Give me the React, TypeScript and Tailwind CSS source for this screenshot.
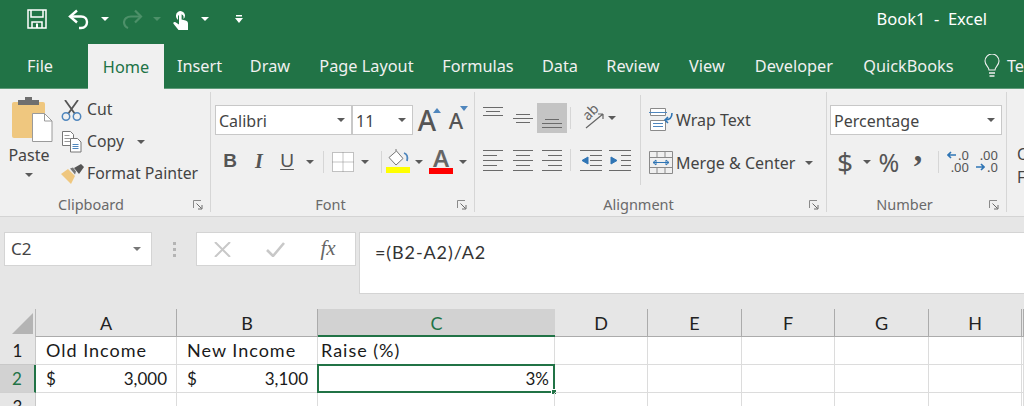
import type { ReactNode } from 'react';

const uiFont = 'font-["Noto_Sans",sans-serif]';
const cellFont = 'font-["Lato",sans-serif]';

function Caret({ className = 'fill-[#5a5a5a]' }: { className?: string }) {
  return (
    <svg width="8" height="4" viewBox="0 0 8 4" className={className}>
      <path d="M0 0h8L4 4z" />
    </svg>
  );
}

function Slot({ className, children }: { className: string; children?: ReactNode }) {
  return <div className={`flex shrink-0 items-center justify-center ${className}`}>{children}</div>;
}

function Launcher() {
  return (
    <svg width="10" height="10" viewBox="0 0 10 10" fill="none" stroke="#8a8a8a">
      <path d="M.5 8V.5H8" />
      <path d="M3.5 3.5l5 5M9 5v4H5" stroke="#6a6a6a" />
    </svg>
  );
}

function Group({ className, label, labelClass = '', children }: { className: string; label: string; labelClass?: string; children: ReactNode }) {
  return (
    <div className={`flex h-[120px] shrink-0 flex-col border-r border-[#d6d6d6] ${className}`}>
      <div className="min-h-0 flex-1">{children}</div>
      <div className="flex h-[17px] items-center pt-[2px]">
        <div className={`flex-1 text-center text-[14.5px] leading-none text-[#6a6a6a] ${labelClass}`}>{label}</div>
        <Slot className="w-[24px]">
          <Launcher />
        </Slot>
      </div>
    </div>
  );
}

function Combo({ className, text }: { className: string; text: string }) {
  return (
    <div className={`flex h-[30px] shrink-0 items-center border border-[#c8c8c8] bg-white pl-[3px] ${className}`}>
      <span className="flex-1 pt-[2px] text-[16px] text-[#444]">{text}</span>
      <Slot className="w-[20px]">
        <Caret />
      </Slot>
    </div>
  );
}

function Lines({ rows, w = 20, h = 20 }: { rows: [number, number, number][]; w?: number; h?: number }) {
  return (
    <svg width={w} height={h} viewBox={`0 0 ${w} ${h}`} stroke="#6a6a6a">
      {rows.map(([y, a, b], i) => (
        <path key={i} d={`M${a} ${y + 0.5}H${b}`} />
      ))}
    </svg>
  );
}

function Sep({ className = 'h-[22px]' }: { className?: string }) {
  return <div className={`w-px shrink-0 bg-[#d6d6d6] ${className}`} />;
}

function TitleBar() {
  return (
    <div className="flex h-[44px] items-center pb-[6px] text-white">
      <Slot className="ml-[27px] w-[20px]">
        <svg width="20" height="20" viewBox="0 0 20 20" fill="none" stroke="#fff" strokeWidth="1.5">
          <path d="M1 1h18v18H1z" />
          <path d="M4 1v7h12V1M5 19v-6h10v6" />
          <path d="M9 14.5h2V19H9z" fill="#fff" stroke="none" />
        </svg>
      </Slot>
      <Slot className="ml-[21px] w-[22px]">
        <svg width="22" height="21" viewBox="0 0 22 21" fill="none" stroke="#fff" strokeWidth="2.4">
          <path d="M9 1.5L2 7.5l7 6" />
          <path d="M3 7.5h10c4 0 6 2.6 6 5.5s-2 6-6 6h-2" />
        </svg>
      </Slot>
      <Slot className="ml-[11px] w-[8px]">
        <Caret className="fill-white" />
      </Slot>
      <Slot className="ml-[13px] w-[21px]">
        <svg width="21" height="20" viewBox="0 0 21 20" fill="none" stroke="#4d9069" strokeWidth="2.2">
          <path d="M13 1.5l6 6-6 6" />
          <path d="M18 7.5H9c-4 0-7 2.5-7 5.5s1.5 5 4 6" />
        </svg>
      </Slot>
      <Slot className="ml-[10px] w-[8px]">
        <Caret className="fill-[#4d9069]" />
      </Slot>
      <Slot className="ml-[11px] w-[17px]">
        <svg width="17" height="21" viewBox="0 0 17 21" fill="#fff">
          <path d="M4 7a4.5 4.5 0 1 1 7.500 3V8.500A2.800 2.800 0 1 0 6 8.500V11A4.500 4.500 0 0 1 4 7z" />
          <path d="M7 5.500a1.300 1.300 0 0 1 2.600 0v5l4 1c1.500.4 2.400 1.500 2.400 3V21H6.500L1.500 14.800c-.8-1.200.8-2.500 2-1.500L7 15.500z" />
        </svg>
      </Slot>
      <Slot className="ml-[12px] w-[8px]">
        <Caret className="fill-white" />
      </Slot>
      <Slot className="ml-[26px] w-[8px]">
        <svg width="8" height="8" viewBox="0 0 8 8" fill="#fff">
          <path d="M1 0h6v1.500H1zM0 3h8L4 8z" />
        </svg>
      </Slot>
      <div className="ml-auto mr-[37px] whitespace-pre pt-px text-[16.5px]">Book1  -  Excel</div>
    </div>
  );
}

const tabs: [string, string][] = [
  ['Insert', 'w-[71px]'],
  ['Draw', 'w-[70px]'],
  ['Page Layout', 'w-[123px]'],
  ['Formulas', 'w-[100px]'],
  ['Data', 'w-[64px]'],
  ['Review', 'w-[82px]'],
  ['View', 'w-[66px]'],
  ['Developer', 'w-[108px]'],
  ['QuickBooks', 'w-[121px]'],
];

function Tabs() {
  return (
    <div className="flex h-[45px] items-stretch border-b border-[#5f9a79] text-[16.3px] text-[#f0f0f0]">
      <div className="flex w-[88px] items-center pl-[27px] pt-px">File</div>
      <div className="-mb-px flex w-[76px] items-center justify-center bg-[#f0f0f0] pt-px text-[#217346]">Home</div>
      {tabs.map(([name, w]) => (
        <div key={name} className={`flex items-center justify-center whitespace-nowrap pt-px ${w}`}>
          {name}
        </div>
      ))}
      <Slot className="ml-[15px] w-[16px] pb-[2px]">
        <svg width="16" height="23" viewBox="0 0 16 23" fill="none" stroke="#f0f0f0" strokeWidth="1.100">
          <path d="M5 16c0-3-4-4.500-4-9a7 7 0 0 1 14 0c0 4.500-4 6-4 9z" />
          <path d="M5 19h6M5.500 22h5" strokeWidth="1.600" />
        </svg>
      </Slot>
      <div className="ml-[7px] flex items-center pt-px">Te</div>
    </div>
  );
}

function Clipboard() {
  return (
    <Group className="w-[211px]" label="Clipboard" labelClass="pr-[4px]">
      <div className="flex">
        <div className="flex w-[61px] shrink-0 flex-col">
          <svg width="41" height="45" viewBox="0 0 41 45" className="ml-[12px] mt-[5px]">
            <rect x="0" y="5" width="33" height="36" rx="2" fill="#efc77f" />
            <path d="M6 8V3h7V0h7v3h7v5z" fill="#6f6f6f" />
            <path d="M20.500 16.500h12l7.500 7.500v20.500H20.500z" fill="#fff" stroke="#9a9a9a" />
            <path d="M32.500 16.500V24H40" fill="none" stroke="#9a9a9a" />
          </svg>
          <div className="mt-[3px] pr-[3px] text-center text-[16px] leading-[20px] text-[#444]">Paste</div>
          <Slot className="mt-[8px] w-[61px] pr-[3px]">
            <Caret />
          </Slot>
        </div>
        <div className="mt-[2px] flex flex-col text-[15.8px] text-[#444]">
          <div className="flex h-[32px] items-center">
            <Slot className="w-[26px] justify-start">
              <svg width="21" height="21" viewBox="0 0 21 21" fill="none">
                <path d="M4 0l10 14M17 0L7 14" stroke="#555" strokeWidth="1.800" />
                <circle cx="5" cy="16.500" r="3.700" stroke="#4f86bd" strokeWidth="1.500" />
                <circle cx="16" cy="16.500" r="3.700" stroke="#4f86bd" strokeWidth="1.500" />
              </svg>
            </Slot>
            <span>Cut</span>
          </div>
          <div className="flex h-[32px] items-center">
            <Slot className="w-[26px] justify-start">
              <svg width="21" height="22" viewBox="0 0 21 22" fill="#fff" stroke="#777">
                <path d="M1.500 .5h8l3 3v11h-11z" />
                <path d="M3.500 4.500h5M3.500 7.500h6M3.500 10.500h6" stroke="#999" />
                <path d="M9.500 7.500h7l3.500 3.500v10H9.500z" />
                <path d="M11.500 13.500h6M11.500 15.500h6M11.500 17.500h6" stroke="#4f86bd" />
              </svg>
            </Slot>
            <span>Copy</span>
            <Slot className="ml-[13px] w-[8px]">
              <Caret />
            </Slot>
          </div>
          <div className="flex h-[32px] items-center">
            <Slot className="w-[26px] justify-start">
              <svg width="23" height="20" viewBox="0 0 23 20">
                <path d="M0 10l7-5 7 7-4 8z" fill="#efc77f" />
                <path d="M9 4.500l3-1 3 4-1 3z" fill="#777" />
                <path d="M13 4l7-4 3 3-5 7z" fill="#555" />
              </svg>
            </Slot>
            <span className="whitespace-nowrap">Format Painter</span>
          </div>
        </div>
      </div>
    </Group>
  );
}

function Font() {
  return (
    <Group className="w-[264px]" label="Font">
      <div className="flex items-center pl-[4px] pt-[13px]">
        <Combo className="w-[137px]" text="Calibri" />
        <Combo className="w-[61px]" text="11" />
        <Slot className="ml-[2px] w-[24px] items-start">
          <span className="relative text-[28px] font-medium leading-[30px] text-[#555]">
            A
            <svg width="8" height="5" viewBox="0 0 8 5" className="absolute right-[-5px] top-[3px] fill-[#4f86bd]">
              <path d="M4 0l4 5H0z" />
            </svg>
          </span>
        </Slot>
        <Slot className="ml-[7px] w-[20px]">
          <span className="relative text-[22px] font-medium leading-[30px] text-[#555]">
            A
            <svg width="8" height="5" viewBox="0 0 8 5" className="absolute right-[-5px] top-[1px] fill-[#4f86bd]">
              <path d="M0 0h8L4 5z" />
            </svg>
          </span>
        </Slot>
      </div>
      <div className="mt-[13px] flex h-[28px] items-center pl-[5px] text-[#555]">
        <Slot className="w-[28px] pb-[2px] font-['Liberation_Sans',sans-serif] text-[19px] font-bold">B</Slot>
        <Slot className="ml-px w-[28px] pb-[2px] font-['Liberation_Serif',serif] text-[20px] font-bold italic">I</Slot>
        <Slot className="w-[28px] pb-[2px] font-['Liberation_Sans',sans-serif] text-[19px] underline underline-offset-2">U</Slot>
        <Slot className="w-[18px]">
          <Caret />
        </Slot>
        <Slot className="w-[8px]">
          <Sep />
        </Slot>
        <Slot className="ml-[3px] w-[26px]">
          <svg width="22" height="20" viewBox="0 0 22 20" fill="#fff" stroke="#8a8a8a">
            <path d="M.5.5h21v19H.5z" strokeDasharray="1 1" />
            <path d="M11 .5v19M.5 10h21" strokeDasharray="1 1" />
          </svg>
        </Slot>
        <Slot className="ml-[3px] w-[12px]">
          <Caret />
        </Slot>
        <Slot className="ml-[6px] w-[8px]">
          <Sep />
        </Slot>
        <Slot className="w-[25px] pb-[3px]">
          <svg width="24" height="24" viewBox="0 0 24 24" fill="none">
            <path d="M3 8.500L10.500 2 17 9.500 10 16z" fill="#fff" stroke="#777" />
            <path d="M10 2V0" stroke="#777" />
            <path d="M18 4c3 1 4 4 3 8" stroke="#4f86bd" strokeWidth="1.800" />
            <path d="M0 18h24v6H0z" fill="#ffff00" />
          </svg>
        </Slot>
        <Slot className="ml-[5px] w-[8px]">
          <Caret />
        </Slot>
        <Slot className="ml-[5px] w-[26px] pb-[3px]">
          <div className="flex flex-col items-center">
            <span className="h-[20px] text-[24px] font-semibold leading-[20px] text-[#666]">A</span>
            <div className="h-[6px] w-[24px] bg-[#ff0000]" />
          </div>
        </Slot>
        <Slot className="ml-[5px] w-[8px]">
          <Caret />
        </Slot>
      </div>
    </Group>
  );
}

function Alignment() {
  return (
    <Group className="w-[352px]" label="Alignment">
      <div className="flex">
        <div className="flex w-[165px] shrink-0 flex-col pl-[3px] pt-[11px]">
          <div className="flex h-[30px] items-center">
            <Slot className="w-[30px] self-start pt-[4px]">
              <Lines rows={[[0, 0, 20], [4, 3, 17], [8, 0, 20]]} h={9} />
            </Slot>
            <Slot className="w-[29px]">
              <Lines rows={[[0, 3, 17], [4, 0, 20], [8, 3, 17]]} h={9} />
            </Slot>
            <Slot className="h-[30px] w-[30px] items-end bg-[#c4c4c4] pb-[5px]">
              <Lines rows={[[0, 3, 17], [4, 0, 20], [8, 0, 20]]} h={9} />
            </Slot>
            <Slot className="ml-[3px] w-px">
              <Sep />
            </Slot>
            <Slot className="ml-[11px] w-[22px]">
              <div className="relative h-[22px] w-[22px]">
                <svg width="22" height="22" viewBox="0 0 22 22" fill="none" stroke="#666">
                  <path d="M4 21L21 7M21 7h-5M21 7v5" strokeWidth="1.200" />
                </svg>
                <span className="absolute left-[0px] top-[-2px] -rotate-45 text-[14px] leading-none text-[#666]">ab</span>
              </div>
            </Slot>
            <Slot className="ml-[4px] w-[8px]">
              <Caret />
            </Slot>
          </div>
          <div className="mt-[12px] flex h-[30px] items-center">
            <Slot className="w-[30px]">
              <Lines rows={[[0, 0, 20], [5, 0, 14], [10, 0, 20], [15, 0, 14], [20, 0, 20]]} h={21} />
            </Slot>
            <Slot className="w-[29px]">
              <Lines rows={[[0, 0, 20], [5, 3, 17], [10, 0, 20], [15, 3, 17], [20, 0, 20]]} h={21} />
            </Slot>
            <Slot className="w-[30px]">
              <Lines rows={[[0, 0, 20], [5, 6, 20], [10, 0, 20], [15, 6, 20], [20, 0, 20]]} h={21} />
            </Slot>
            <Slot className="ml-[3px] w-px">
              <Sep />
            </Slot>
            <Slot className="ml-[9px] w-[22px]">
              <svg width="22" height="21" viewBox="0 0 22 21" stroke="#6a6a6a" fill="none">
                <path d="M0 .5h22M10 5.500h12M10 10.500h12M10 15.500h12M0 20.500h22" />
                <path d="M8 7L2 10.500 8 14z" fill="#2f75b5" stroke="#2f75b5" />
              </svg>
            </Slot>
            <Slot className="ml-[7px] w-[22px]">
              <svg width="22" height="21" viewBox="0 0 22 21" stroke="#6a6a6a" fill="none">
                <path d="M0 .5h22M12 5.500h10M12 10.500h10M12 15.500h10M0 20.500h22" />
                <path d="M2 7l6 3.500L2 14z" fill="#2f75b5" stroke="#2f75b5" />
              </svg>
            </Slot>
          </div>
        </div>
        <div className="mt-[3px] h-[90px] w-px shrink-0 bg-[#d6d6d6]" />
        <div className="flex flex-col pl-[8px] pt-[6px] text-[16px] text-[#444]">
          <div className="flex h-[43px] items-center">
            <Slot className="w-[27px] justify-start">
              <svg width="24" height="23" viewBox="0 0 24 23" fill="none">
                <path d="M1.500 .5h15v7h-15zM1.500 12.500h15v10h-15z" fill="#fff" stroke="#8a8a8a" />
                <path d="M0 4.500h18" stroke="#4f86bd" />
                <path d="M4 15.500h10M4 18.500h10" stroke="#4f86bd" />
                <path d="M23 5c0 5-3 7-7 7M19 9l-3 3 3 3" stroke="#2f75b5" strokeWidth="1.600" />
              </svg>
            </Slot>
            <span>Wrap Text</span>
          </div>
          <div className="flex h-[43px] items-center">
            <Slot className="w-[27px] justify-start">
              <svg width="24" height="23" viewBox="0 0 24 23" fill="none" stroke="#8a8a8a">
                <path d="M.5 .5h23v22H.5zM.5 6.500h23M.5 16.500h23M8 .5v6M16 .5v6M8 16.500v6M16 16.500v6" />
                <path d="M4 11.500h16M4 11.500l3-2.500v5zM20 11.500l-3-2.500v5z" stroke="#2f75b5" />
              </svg>
            </Slot>
            <span className="whitespace-nowrap">Merge &amp; Center</span>
            <Slot className="ml-[10px] w-[8px]">
              <Caret />
            </Slot>
          </div>
        </div>
      </div>
    </Group>
  );
}

function Arrow({ right = false }: { right?: boolean }) {
  return (
    <svg width="9" height="8" viewBox="0 0 9 8" fill="none" stroke="#2f75b5" strokeWidth="1.600">
      <path d={right ? 'M0 4h8M5 1l3 3-3 3' : 'M9 4H1M4 1L1 4l3 3'} />
    </svg>
  );
}

function NumberGroup() {
  return (
    <Group className="w-[180px]" label="Number">
      <div className="pl-[3px] pt-[13px]">
        <Combo className="w-[172px]" text="Percentage" />
      </div>
      <div className="mt-[13px] flex h-[28px] items-center text-[#555]">
        <Slot className="ml-[8px] w-[20px] text-[28px] leading-none">$</Slot>
        <Slot className="ml-[8px] w-[8px]">
          <Caret />
        </Slot>
        <Slot className="ml-[6px] w-[24px] text-[25px] leading-none">%</Slot>
        <Slot className="ml-[5px] h-[24px] w-[24px] items-start font-['Liberation_Serif',serif] text-[34px] font-bold leading-[0px]">,</Slot>
        <Slot className="ml-[8px] w-px">
          <Sep />
        </Slot>
        <div className="mb-[3px] ml-[5px] flex w-[25px] shrink-0 flex-col items-end text-[13px] leading-[12px]">
          <div className="flex items-center gap-[2px]">
            <Arrow />
            <span>.0</span>
          </div>
          <span>.00</span>
        </div>
        <div className="mb-[3px] ml-[4px] flex w-[25px] shrink-0 flex-col items-end text-[13px] leading-[12px]">
          <span>.00</span>
          <div className="flex items-center gap-[2px]">
            <Arrow right />
            <span>.0</span>
          </div>
        </div>
      </div>
    </Group>
  );
}

function Ribbon() {
  return (
    <div className="flex h-[128px] items-start overflow-hidden border-b border-[#d4d4d4] bg-[#f0f0f0] pt-[3px]">
      <Clipboard />
      <Font />
      <Alignment />
      <NumberGroup />
      <div className="flex flex-col pl-[10px] pt-[51px] text-[15.5px] leading-[23px] text-[#444]">
        <span>C</span>
        <span>Fo</span>
      </div>
    </div>
  );
}

function FormulaBar() {
  return (
    <div className="flex h-[92px] items-start bg-[#e6e6e6] pl-[4px] pt-[15px]">
      <div className="flex h-[34px] w-[148px] shrink-0 items-center border border-[#d4d4d4] bg-white pl-[6px] text-[17px] text-[#444]">
        <span className="flex-1">C2</span>
        <Slot className="w-[28px]">
          <Caret className="fill-[#777]" />
        </Slot>
      </div>
      <div className="flex h-[34px] w-[44px] shrink-0 flex-col items-center justify-center gap-[3px]">
        <div className="h-[3px] w-[3px] bg-[#b4b4b4]" />
        <div className="h-[3px] w-[3px] bg-[#b4b4b4]" />
        <div className="h-[3px] w-[3px] bg-[#b4b4b4]" />
      </div>
      <div className="flex h-[34px] w-[160px] shrink-0 items-center border border-[#d4d4d4] bg-white">
        <Slot className="ml-[17px] w-[17px]">
          <svg width="17" height="15" viewBox="0 0 17 15" stroke="#c8c8c8" strokeWidth="2" fill="none">
            <path d="M1 0l15 15M16 0L1 15" />
          </svg>
        </Slot>
        <Slot className="ml-[35px] w-[19px]">
          <svg width="19" height="15" viewBox="0 0 19 15" stroke="#c8c8c8" strokeWidth="2.600" fill="none">
            <path d="M1 8l6 6L18 1" />
          </svg>
        </Slot>
        <Slot className="ml-[33px] w-[20px] font-['Liberation_Serif',serif] text-[21px] italic text-[#666]">fx</Slot>
      </div>
      <div className={`ml-[3px] flex h-[62px] flex-1 border-b border-l border-t border-[#d4d4d4] bg-white pl-[15px] pt-[6px] text-[18px] tracking-[0.9px] text-[#333] ${cellFont}`}>
        =(B2-A2)/A2
      </div>
    </div>
  );
}

const cols: [string, string][] = [
  ['A', 'w-[141px]'],
  ['B', 'w-[141px]'],
  ['C', 'w-[237px]'],
  ['D', 'w-[93px]'],
  ['E', 'w-[94px]'],
  ['F', 'w-[93px]'],
  ['G', 'w-[94px]'],
  ['H', 'w-[93px]'],
  ['', 'flex-1'],
];

function HeaderRow() {
  return (
    <div className="flex h-[28px] bg-[#e6e6e6] text-[18px] text-[#222]">
      <div className="flex w-[36px] shrink-0 items-end border-r border-[#b8b8b8] pb-[3px] pl-[12px]">
        <svg width="21" height="21" viewBox="0 0 21 21" className="fill-[#b4b4b4]">
          <path d="M21 0v21H0z" />
        </svg>
      </div>
      {cols.map(([name, w], i) =>
        name === 'C' ? (
          <div key={i} className={`flex items-center justify-center border-b-2 border-[#217346] bg-[#d2d2d2] pt-[2px] text-[#217346] ${w}`}>
            {name}
          </div>
        ) : (
          <div key={i} className={`flex items-center justify-center border-b border-r border-[#ababab] pt-[2px] ${w}`}>
            {name}
          </div>
        ),
      )}
    </div>
  );
}

function Row({ n, selected = false, children }: { n: string; selected?: boolean; children: ReactNode }) {
  return (
    <div className="flex h-[28px] text-[17px] text-[#1a1a1a]">
      <div
        className={`flex w-[36px] shrink-0 items-center justify-center border-b border-r ${
          selected ? 'border-r-2 border-b-[#d0d0d0] border-r-[#217346] bg-[#d2d2d2] text-[#217346]' : 'border-[#c8c8c8] bg-[#e6e6e6]'
        }`}
      >
        {n}
      </div>
      {children}
    </div>
  );
}

function Cell({ className, children }: { className: string; children?: ReactNode }) {
  return <div className={`relative flex items-center border-b border-r border-[#dcdcdc] ${className}`}>{children}</div>;
}

function Money({ value }: { value: string }) {
  return (
    <div className="flex w-full justify-between pl-[10px] pr-[9px] pt-px">
      <span>$</span>
      <span>{value}</span>
    </div>
  );
}

function EmptyCells() {
  return (
    <>
      <Cell className="w-[93px]" />
      <Cell className="w-[94px]" />
      <Cell className="w-[93px]" />
      <Cell className="w-[94px]" />
      <Cell className="w-[93px]" />
      <Cell className="flex-1" />
    </>
  );
}

function Sheet() {
  return (
    <div className={`bg-white ${cellFont}`}>
      <HeaderRow />
      <Row n="1">
        <Cell className="w-[141px] pl-[10px] text-[18px] tracking-[1px]">Old Income</Cell>
        <Cell className="w-[141px] pl-[10px] text-[18px] tracking-[1px]">New Income</Cell>
        <Cell className="w-[237px] pl-[3px] text-[18px] tracking-[1px]">Raise (%)</Cell>
        <EmptyCells />
      </Row>
      <Row n="2" selected>
        <Cell className="w-[141px]">
          <Money value="3,000" />
        </Cell>
        <Cell className="w-[141px]">
          <Money value="3,100" />
        </Cell>
        <Cell className="w-[237px] justify-end pr-[5px] pt-px">
          3%
          <div className="absolute -left-px -top-px bottom-[-1px] right-[-1px] border-2 border-[#217346]" />
          <div className="absolute bottom-[-3px] right-[-3px] h-[6px] w-[6px] border border-white bg-[#217346]" />
        </Cell>
        <EmptyCells />
      </Row>
      <Row n="3">
        <Cell className="w-[141px]" />
        <Cell className="w-[141px]" />
        <Cell className="w-[237px]" />
        <EmptyCells />
      </Row>
    </div>
  );
}

export default function App() {
  return (
    <div className={`h-[406px] w-[1024px] overflow-hidden bg-[#217346] ${uiFont}`}>
      <TitleBar />
      <Tabs />
      <Ribbon />
      <FormulaBar />
      <Sheet />
    </div>
  );
}
